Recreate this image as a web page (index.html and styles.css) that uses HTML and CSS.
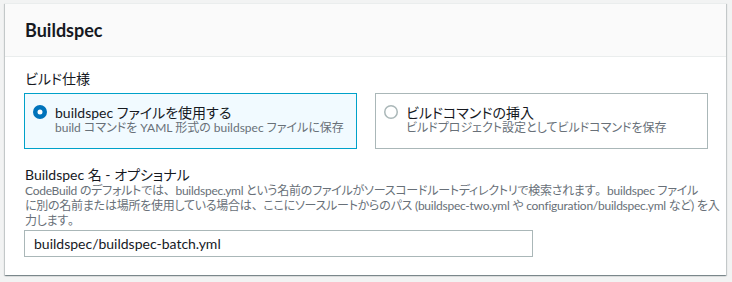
FILE: index.html
```html
<!DOCTYPE html>
<html lang="ja">
<head>
    <meta charset="UTF-8">
    <meta name="viewport" content="width=device-width, initial-scale=1.0">
    <title>Buildspec</title>
    <link rel="stylesheet" href="styles.css">
</head>
<body>

    <div class="container">
        <!-- Header -->
        <div class="container-header">
            <h2>Buildspec</h2>
        </div>

        <div class="container-body">
            <!-- Build spec choice -->
            <div class="field-label">ビルド仕様</div>
            <div class="tiles">
                <label class="tile tile-selected">
                    <svg class="radio" width="14" height="14" viewBox="0 0 14 14">
                        <circle cx="7" cy="7" r="4.75" fill="#fff" stroke="#0073bb" stroke-width="4.5"/>
                    </svg>
                    <span class="tile-text">
                        <span class="tile-title">buildspec ファイルを使用する</span>
                        <span class="tile-desc">build コマンドを YAML 形式の buildspec ファイルに保存</span>
                    </span>
                </label>
                <label class="tile">
                    <svg class="radio" width="14" height="14" viewBox="0 0 14 14">
                        <circle cx="7" cy="7" r="6.25" fill="#fff" stroke="#aab7b8" stroke-width="1.5"/>
                    </svg>
                    <span class="tile-text">
                        <span class="tile-title">ビルドコマンドの挿入</span>
                        <span class="tile-desc">ビルドプロジェクト設定としてビルドコマンドを保存</span>
                    </span>
                </label>
            </div>

            <!-- Buildspec name -->
            <div class="field">
                <div class="field-label">Buildspec 名 - オプショナル</div>
                <div class="field-desc">CodeBuild のデフォルトでは<span class="punct">、</span>buildspec.yml という名前のファイルがソースコードルートディレクトリで検索されます<span class="punct">。</span>buildspec ファイル<br>に別の名前または場所を使用している場合は<span class="punct">、</span>ここにソースルートからのパス (buildspec-two.yml や configuration/buildspec.yml など) を入<br>力します<span class="punct">。</span></div>
                <input type="text" class="text-input" value="buildspec/buildspec-batch.yml">
            </div>
        </div>
    </div>

</body>
</html>
```

FILE: styles.css
```css
body {
    margin: 0;
    padding: 3px 6px 6px 5px;
    background-color: #f2f3f3;
    font-family: Lato, "Noto Sans CJK JP", sans-serif;
    font-feature-settings: "palt";
    color: #16191f;
}

.container {
    background-color: #fff;
    border-top: 1px solid #eaeded;
    box-shadow: 0 1px 1px 0 rgba(0, 28, 36, 0.3), 1px 1px 1px 0 rgba(0, 28, 36, 0.15), -1px 1px 1px 0 rgba(0, 28, 36, 0.15);
}

.container-header {
    background-color: #fafafa;
    border-bottom: 1px solid #eaeded;
    padding: 15px 20px 15px 20px;
}

.container-header h2 {
    margin: 0;
    font-size: 18px;
    font-weight: 700;
    line-height: 22px;
}

.container-body {
    padding: 12px 18px 18px 19px;
}

.field-label {
    font-size: 14px;
    line-height: 20px;
    padding-left: 1px;
    margin-bottom: 4px;
}

.tiles {
    display: grid;
    grid-template-columns: 1fr 1fr;
    gap: 18px;
}

.tile {
    display: flex;
    align-items: flex-start;
    gap: 8px;
    height: 56px;
    box-sizing: border-box;
    padding: 10px 12px 0 8px;
    border: 1px solid #aab7b8;
    background-color: #fff;
}

.tile-selected {
    border-color: #00a1c9;
    background-color: #f1faff;
}

.radio {
    flex: none;
    margin-top: 1px;
}

.tile-text {
    display: flex;
    flex-direction: column;
}

.tile-title {
    font-size: 14px;
    line-height: 17px;
}

.tile-desc {
    font-size: 12px;
    line-height: 14px;
    color: #687078;
}

.field {
    margin-top: 18px;
}

.field .field-label {
    line-height: 16px;
    margin-bottom: 0;
}

.field-desc {
    font-size: 12px;
    line-height: 15px;
    letter-spacing: -0.25px;
    color: #687078;
    padding-left: 1px;
    white-space: nowrap;
}

/* full-width punctuation, not squeezed by palt */
.punct {
    font-feature-settings: normal;
}

.text-input {
    display: block;
    width: 509px;
    height: 27px;
    box-sizing: border-box;
    margin-top: 2px;
    padding: 0 9px;
    border: 1px solid #aab7b8;
    font-family: Lato, "Noto Sans CJK JP", sans-serif;
    font-size: 14px;
    color: #16191f;
    outline: none;
}
```
